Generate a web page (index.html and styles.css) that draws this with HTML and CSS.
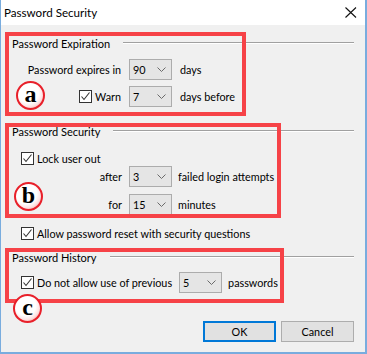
FILE: index.html
```html
<!DOCTYPE html>
<html>
<head>
<meta charset="utf-8">
<link rel="stylesheet" href="styles.css">
</head>
<body>
<div class="win">
  <div class="titlebar">
    <span class="title">Password Security</span>
    <svg class="close" width="12" height="11" viewBox="0 0 12 11"><path d="M0.5 0.5 L11 10.5 M11 0.5 L0.5 10.5" stroke="#111" stroke-width="1.1" fill="none"/></svg>
  </div>
  <div class="content">
    <div class="group-head gh-a"><span>Password Expiration</span><span class="rule"></span></div>
    <div class="grid grid-a">
      <span class="lbl">Password expires in</span>
      <span class="select">90<svg class="chev" width="9" height="5" viewBox="0 0 9 5"><path d="M0.5 0.5 L4.5 4.5 L8.5 0.5" stroke="#6a6a6a" fill="none"/></svg></span>
      <span>days</span>
      <span class="lbl"><span class="cb"><svg width="11" height="11" viewBox="0 0 11 11"><path d="M1.5 5.5 L4 8.5 L9.5 1.5" stroke="#333" stroke-width="1.1" fill="none"/></svg></span>Warn</span>
      <span class="select">7<svg class="chev" width="9" height="5" viewBox="0 0 9 5"><path d="M0.5 0.5 L4.5 4.5 L8.5 0.5" stroke="#6a6a6a" fill="none"/></svg></span>
      <span>days before</span>
    </div>

    <div class="group-head gh-b"><span>Password Security</span><span class="rule"></span></div>
    <div class="check-row lock"><span class="cb"><svg width="11" height="11" viewBox="0 0 11 11"><path d="M1.5 5.5 L4 8.5 L9.5 1.5" stroke="#333" stroke-width="1.1" fill="none"/></svg></span>Lock user out</div>
    <div class="grid grid-b">
      <span class="lbl">after</span>
      <span class="select">3<svg class="chev" width="9" height="5" viewBox="0 0 9 5"><path d="M0.5 0.5 L4.5 4.5 L8.5 0.5" stroke="#6a6a6a" fill="none"/></svg></span>
      <span>failed login attempts</span>
      <span class="lbl">for</span>
      <span class="select">15<svg class="chev" width="9" height="5" viewBox="0 0 9 5"><path d="M0.5 0.5 L4.5 4.5 L8.5 0.5" stroke="#6a6a6a" fill="none"/></svg></span>
      <span>minutes</span>
    </div>
    <div class="check-row allow"><span class="cb"><svg width="11" height="11" viewBox="0 0 11 11"><path d="M1.5 5.5 L4 8.5 L9.5 1.5" stroke="#333" stroke-width="1.1" fill="none"/></svg></span>Allow password reset with security questions</div>

    <div class="group-head gh-c"><span>Password History</span><span class="rule"></span></div>
    <div class="check-row hist"><span class="cb"><svg width="11" height="11" viewBox="0 0 11 11"><path d="M1.5 5.5 L4 8.5 L9.5 1.5" stroke="#333" stroke-width="1.1" fill="none"/></svg></span>Do not allow use of previous<span class="select sel-c">5<svg class="chev" width="9" height="5" viewBox="0 0 9 5"><path d="M0.5 0.5 L4.5 4.5 L8.5 0.5" stroke="#6a6a6a" fill="none"/></svg></span>passwords</div>

    <div class="buttons">
      <span class="btn ok">OK</span>
      <span class="btn">Cancel</span>
    </div>
  </div>

  <div class="redbox box-a"></div>
  <div class="redbox box-b"></div>
  <div class="redbox box-c"></div>
  <div class="badge badge-a">a</div>
  <div class="badge badge-b">b</div>
  <div class="badge badge-c">c</div>
</div>
</body>
</html>
```

FILE: styles.css
```css
html, body {
  margin: 0;
  padding: 0;
  background: #f0f0f0;
}
.win {
  position: relative;
  width: 367px;
  height: 354px;
  box-sizing: border-box;
  border: 1px solid #79acde;
  border-top: 0;
  border-right-width: 2px;
  border-bottom-width: 2px;
  background: #f0f0f0;
  font-family: Lato, "Noto Sans", sans-serif;
  font-size: 10.8px;
  color: #000;
  overflow: hidden;
}
.titlebar {
  height: 25px;
  background: #fff;
  display: flex;
  align-items: center;
  padding-left: 3px;
}
.title {
  font-size: 11.6px;
}
.close {
  margin-left: auto;
  margin-right: 8px;
}
.content {
  padding: 0 11px;
  display: flex;
  flex-direction: column;
}
.group-head {
  display: flex;
  align-items: center;
  height: 16px;
  gap: 13px;
  line-height: 16px;
}
.group-head > span:first-child { font-size: 11px; }
.rule {
  flex: 1;
  height: 0;
  border-top: 1px solid #a0a0a0;
  border-bottom: 1px solid #fff;
  margin-top: -3px;
}
.gh-a { margin-top: 11px; }
.gh-b { margin-top: 17px; }
.gh-c { margin-top: 9px; }

.grid {
  display: grid;
  align-items: center;
  line-height: 21px;
}
.grid-a {
  grid-template-columns: 109px 43px auto;
  column-gap: 8px;
  row-gap: 6px;
  margin-top: 7px;
}
.grid-b {
  grid-template-columns: 110px 43px auto;
  column-gap: 7px;
  row-gap: 7px;
  margin-top: 0;
}
.grid-b > span:nth-child(3n) { margin-left: -1px; }
.lbl {
  display: flex;
  justify-content: flex-end;
  align-items: center;
}
.lbl .cb { margin-right: 3px; }
.select {
  box-sizing: border-box;
  height: 21px;
  background: #e5e5e5;
  border: 1px solid #acacac;
  display: flex;
  align-items: center;
  padding-left: 3px;
  line-height: 19px;
  position: relative;
}
.chev {
  margin-left: auto;
  margin-right: 5px;
}
.cb {
  box-sizing: border-box;
  width: 13px;
  height: 13px;
  border: 1px solid #333;
  background: #fff;
  display: inline-flex;
  align-items: center;
  justify-content: center;
  flex: none;
}
.cb svg { display: block; }
.check-row {
  display: flex;
  align-items: center;
  height: 16px;
  padding-left: 9px;
}
.check-row .cb { margin-right: 3px; }
.lock { margin-top: 10px; }
.allow { margin-top: 10px; }
.hist { margin-top: 6px; height: 21px; }
.sel-c {
  width: 43px;
  margin: 0 6px 0 7px;
}
.buttons {
  display: flex;
  justify-content: flex-end;
  gap: 5px;
  margin-top: 28px;
}
.btn {
  box-sizing: border-box;
  width: 73px;
  height: 21px;
  background: #e1e1e1;
  border: 1px solid #adadad;
  display: flex;
  align-items: center;
  justify-content: center;
}
.btn.ok {
  border: 2px solid #0078d7;
}
.redbox {
  position: absolute;
  box-sizing: border-box;
  border: 4px solid #f64247;
}
.box-a { left: 4px; top: 32px; width: 241px; height: 84px; }
.box-b { left: 4px; top: 123px; width: 276px; height: 95px; }
.box-c { left: 4px; top: 248px; width: 279px; height: 55px; }
.badge {
  position: absolute;
  box-sizing: border-box;
  width: 29px;
  height: 29px;
  border-radius: 50%;
  border: 2px solid #e8202a;
  background: radial-gradient(circle at 42% 38%, #ffffff 0%, #ffffff 48%, #fde4e4 66%, #f5a0a0 86%, #ec5a5a 100%);
  font-family: "Liberation Serif", serif;
  font-weight: bold;
  font-size: 24px;
  line-height: 22px;
  text-align: center;
  color: #000;
}
.badge-a { left: 15px; top: 81px; }
.badge-b { left: 13px; top: 182px; }
.badge-c { left: 12px; top: 294px; }
```
